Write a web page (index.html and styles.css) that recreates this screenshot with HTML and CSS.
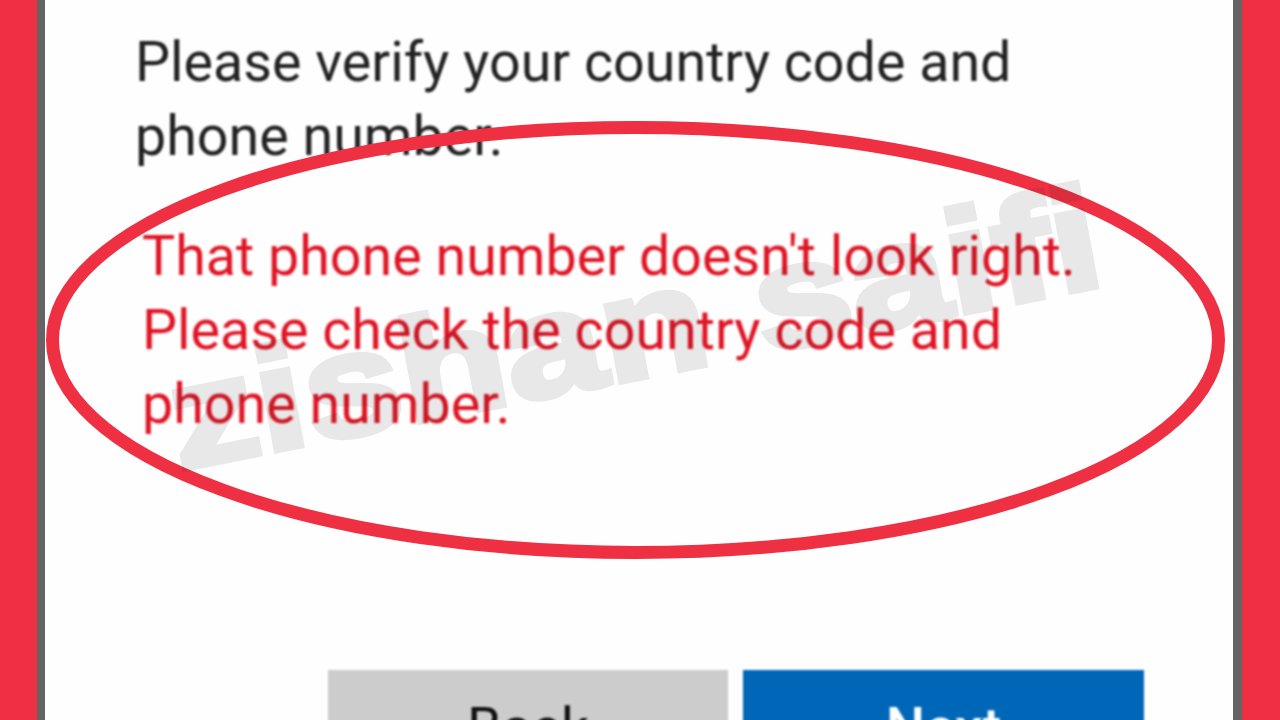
FILE: index.html
```html
<!DOCTYPE html>
<html lang="en">
<head>
    <meta charset="UTF-8">
    <meta name="viewport" content="width=device-width, initial-scale=1.0">
    <title>Verify phone number</title>
    <link rel="stylesheet" href="styles.css">
</head>
<body>
    <div class="container">
        <div class="content">
            <p class="message">Please verify your country code and<br>phone number.</p>
            <p class="error">That phone number doesn't look right.<br>Please check the country code and<br>phone number.</p>
            <div class="buttons">
                <button class="back">Back</button>
                <button class="next">Next</button>
            </div>
        </div>
    </div>

    <svg class="overlay" viewBox="0 0 1280 720">
        <ellipse class="circle" cx="635.5" cy="340" rx="583" ry="212.5"/>
        <text class="watermark" transform="translate(179 470) rotate(-11.3) skewX(-0.7)" textLength="947" lengthAdjust="spacingAndGlyphs">zishan saifi</text>
    </svg>
</body>
</html>
```

FILE: styles.css
```css
* {
    margin: 0;
    padding: 0;
    box-sizing: border-box;
}

body {
    background: #ef2f42;
    height: 100vh;
    padding: 0 38px 0 37px;
    overflow: hidden;
    font-family: Roboto, sans-serif;
}

.container {
    height: 720px;
    background: #fefefe;
    border-left: 8px solid #646464;
    border-right: 9px solid #646464;
    overflow: hidden;
}

.content {
    padding: 25px 89px 0 86px;
    font-size: 55.6px;
    line-height: 74px;
    filter: blur(0.8px);
}

.message,
.error {
    white-space: nowrap;
}

.message {
    margin-left: 4px;
    color: #222;
}

.error {
    margin: 46px 0 0 11px;
    color: #e01525;
}

.buttons {
    display: flex;
    justify-content: flex-end;
    gap: 15px;
    margin-top: 229px;
}

button {
    height: 115px;
    border: none;
    font-family: inherit;
    font-size: 55.6px;
}

.back {
    width: 400px;
    background: #ccc;
    color: #111;
}

.next {
    width: 401px;
    background: #0067b8;
    color: white;
    font-weight: 500;
}

.overlay {
    position: absolute;
    top: 0;
    left: 0;
    width: 1280px;
    height: 720px;
}

.circle {
    fill: none;
    stroke: #ef2f42;
    stroke-width: 13px;
}

.watermark {
    font-family: "Liberation Sans", Arial, sans-serif;
    font-size: 146px;
    font-weight: bold;
    fill: #222;
    stroke: #222;
    stroke-width: 6px;
    opacity: 0.095;
}
```
